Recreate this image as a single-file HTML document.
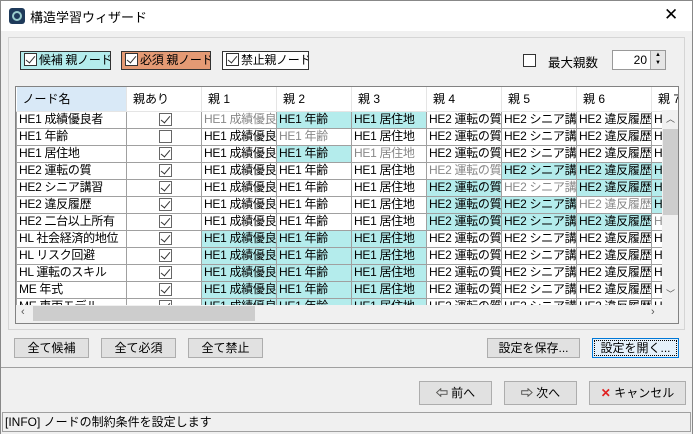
<!DOCTYPE html>
<html><head><meta charset="utf-8"><style>
*{box-sizing:border-box;margin:0;padding:0}
body{width:693px;height:434px;background:#f0f0f0;font-family:"Liberation Sans","Noto Sans CJK JP",sans-serif;font-size:12px;color:#000;position:relative;overflow:hidden}
.abs{position:absolute}
.title{left:0;top:0;width:693px;height:31px;background:#fff;border:1px solid #888;border-bottom:none}
.btn{position:absolute;background:#e1e1e1;border:1px solid #adadad;text-align:center;font-size:12px;line-height:18px;white-space:nowrap}
.cb{display:inline-block;width:13px;height:13px;border:1px solid #333;background:#fff;position:relative;vertical-align:middle}
.cb.c::after{content:"";position:absolute;left:3px;top:0px;width:4px;height:8px;border:solid #333;border-width:0 1.5px 1.5px 0;transform:rotate(40deg)}
.tag{position:absolute;height:19px;border:1px solid #333;font-size:12px;line-height:17px;padding-left:3px;white-space:nowrap;overflow:hidden;letter-spacing:-0.3px}
.tag .cb{margin-right:2px;margin-top:-2px}
table{border-collapse:collapse;table-layout:fixed;font-size:12px}
td{height:17px;border:1px solid #a0a0a0;white-space:nowrap;overflow:hidden;padding-left:2px;line-height:15px;letter-spacing:-0.3px}
th{height:24px;font-weight:normal;text-align:left;padding-left:6px;background:#fff;border-right:1px solid #e5e5e5;border-bottom:1px solid #e5e5e5}
.t{background:#b4ecec}.g{color:#888}
td.k{text-align:center}
td.k .cb{border-color:#666;width:13px;height:13px}
</style></head><body>
<div class="abs title"></div>
<div class="abs" style="left:9px;top:8px;width:16px;height:16px;background:#1e3a5a;border-radius:3px"><div style="margin:3px;width:10px;height:10px;border-radius:50%;border:2px solid #9cc"></div></div>
<div class="abs" style="left:30px;top:7px;font-size:13px">構造学習ウィザード</div>
<div class="abs" style="left:664px;top:5px;font-size:17px;font-weight:300">✕</div>
<div class="abs" style="left:0;top:31px;width:693px;height:403px;border-left:1px solid #888;border-right:1px solid #888"></div>
<div class="abs" style="left:8px;top:37px;width:677px;height:293px;border:1px solid #d5d5d5"></div>

<div class="tag" style="left:20px;top:51px;width:91px;background:#b4ecec"><span class="cb c"></span>候補 親ノード</div>
<div class="tag" style="left:121px;top:51px;width:90px;background:#e49a74"><span class="cb c"></span>必須 親ノード</div>
<div class="tag" style="left:222px;top:51px;width:87px;background:#fff"><span class="cb c"></span>禁止親ノード</div>
<div class="abs" style="left:523px;top:53px"><span class="cb"></span></div>
<div class="abs" style="left:548px;top:52px;font-size:12.5px">最大親数</div>
<div class="abs" style="left:612px;top:50px;width:54px;height:20px;border:1px solid #999;background:#fff;font-size:12px;line-height:18px;text-align:right;padding-right:18px">20</div>
<div class="abs" style="left:650px;top:51px;width:15px;height:18px;background:#e6e6e6;border-left:1px solid #aaa;font-size:6px;line-height:8px;text-align:center">▲<br>▼</div>

<div class="abs" style="left:15px;top:86px;width:664px;height:238px;border:1px solid #828282;background:#fff;overflow:hidden">
<table style="width:740px">
<colgroup><col style="width:110px"><col style="width:75px"><col style="width:75px"><col style="width:75px"><col style="width:75px"><col style="width:75px"><col style="width:75px"><col style="width:75px"><col style="width:105px"></colgroup>
<tr><th style="background:#d9e9f7">ノード名</th><th>親あり</th><th>親 1</th><th>親 2</th><th>親 3</th><th>親 4</th><th>親 5</th><th>親 6</th><th>親 7</th></tr>
<tr><td>HE1 成績優良者</td><td class="k"><span class="cb c"></span></td><td class="g">HE1 成績優良者</td><td class="t">HE1 年齢</td><td class="t">HE1 居住地</td><td>HE2 運転の質</td><td>HE2 シニア講習</td><td>HE2 違反履歴</td><td>HE2</td></tr>
<tr><td>HE1 年齢</td><td class="k"><span class="cb"></span></td><td>HE1 成績優良者</td><td class="g">HE1 年齢</td><td>HE1 居住地</td><td>HE2 運転の質</td><td>HE2 シニア講習</td><td>HE2 違反履歴</td><td>HE2</td></tr>
<tr><td>HE1 居住地</td><td class="k"><span class="cb c"></span></td><td>HE1 成績優良者</td><td class="t">HE1 年齢</td><td class="g">HE1 居住地</td><td>HE2 運転の質</td><td>HE2 シニア講習</td><td>HE2 違反履歴</td><td>HE2</td></tr>
<tr><td>HE2 運転の質</td><td class="k"><span class="cb c"></span></td><td>HE1 成績優良者</td><td>HE1 年齢</td><td>HE1 居住地</td><td class="g">HE2 運転の質</td><td class="t">HE2 シニア講習</td><td class="t">HE2 違反履歴</td><td class="t">HE2</td></tr>
<tr><td>HE2 シニア講習</td><td class="k"><span class="cb c"></span></td><td>HE1 成績優良者</td><td>HE1 年齢</td><td>HE1 居住地</td><td class="t">HE2 運転の質</td><td class="g">HE2 シニア講習</td><td class="t">HE2 違反履歴</td><td class="t">HE2</td></tr>
<tr><td>HE2 違反履歴</td><td class="k"><span class="cb c"></span></td><td>HE1 成績優良者</td><td>HE1 年齢</td><td>HE1 居住地</td><td class="t">HE2 運転の質</td><td class="t">HE2 シニア講習</td><td class="g">HE2 違反履歴</td><td class="t">HE2</td></tr>
<tr><td>HE2 二台以上所有</td><td class="k"><span class="cb c"></span></td><td>HE1 成績優良者</td><td>HE1 年齢</td><td>HE1 居住地</td><td class="t">HE2 運転の質</td><td class="t">HE2 シニア講習</td><td class="t">HE2 違反履歴</td><td class="g">HE2</td></tr>
<tr><td>HL 社会経済的地位</td><td class="k"><span class="cb c"></span></td><td class="t">HE1 成績優良者</td><td class="t">HE1 年齢</td><td class="t">HE1 居住地</td><td>HE2 運転の質</td><td>HE2 シニア講習</td><td>HE2 違反履歴</td><td>HE2</td></tr>
<tr><td>HL リスク回避</td><td class="k"><span class="cb c"></span></td><td class="t">HE1 成績優良者</td><td class="t">HE1 年齢</td><td class="t">HE1 居住地</td><td>HE2 運転の質</td><td>HE2 シニア講習</td><td>HE2 違反履歴</td><td>HE2</td></tr>
<tr><td>HL 運転のスキル</td><td class="k"><span class="cb c"></span></td><td class="t">HE1 成績優良者</td><td class="t">HE1 年齢</td><td class="t">HE1 居住地</td><td>HE2 運転の質</td><td>HE2 シニア講習</td><td>HE2 違反履歴</td><td>HE2</td></tr>
<tr><td>ME 年式</td><td class="k"><span class="cb c"></span></td><td class="t">HE1 成績優良者</td><td class="t">HE1 年齢</td><td class="t">HE1 居住地</td><td>HE2 運転の質</td><td>HE2 シニア講習</td><td>HE2 違反履歴</td><td>HE2</td></tr>
<tr><td>ME 車両モデル</td><td class="k"><span class="cb c"></span></td><td class="t">HE1 成績優良者</td><td class="t">HE1 年齢</td><td class="t">HE1 居住地</td><td>HE2 運転の質</td><td>HE2 シニア講習</td><td>HE2 違反履歴</td><td>HE2</td></tr>
</table>
<div class="abs" style="left:646px;top:23px;width:17px;height:195px;background:#f0f0f0"><div style="text-align:center;font-size:9px;color:#555;margin-top:2px">︿</div><div style="margin:4px 1px;height:86px;background:#cdcdcd"></div><div class="abs" style="top:177px;width:17px;text-align:center;font-size:9px;color:#555">﹀</div></div>
<div class="abs" style="left:0;top:218px;width:663px;height:18px;background:#f0f0f0"><span class="abs" style="left:5px;top:1px;font-size:11px;color:#555">‹</span><div class="abs" style="left:17px;top:1px;width:222px;height:15px;background:#cdcdcd"></div><span class="abs" style="left:635px;top:1px;font-size:11px;color:#555">›</span></div>
</div>

<div class="btn" style="left:14px;top:338px;width:75px;height:20px">全て候補</div>
<div class="btn" style="left:101px;top:338px;width:75px;height:20px">全て必須</div>
<div class="btn" style="left:188px;top:338px;width:75px;height:20px">全て禁止</div>
<div class="btn" style="left:487px;top:338px;width:93px;height:20px">設定を保存...</div>
<div class="btn" style="left:592px;top:338px;width:87px;height:20px;background:#e5f1fb;border-color:#0078d7;outline:1px dotted #000;outline-offset:-3px">設定を開く...</div>
<div class="abs" style="left:1px;top:367px;width:691px;border-top:1px solid #a0a0a0"></div>
<div class="btn" style="left:419px;top:381px;width:73px;height:24px;line-height:22px"><span style="color:#e8c84a;-webkit-text-stroke:0.5px #555">⇦</span> 前へ</div>
<div class="btn" style="left:504px;top:381px;width:73px;height:24px;line-height:22px"><span style="color:#e8c84a;-webkit-text-stroke:0.5px #555">⇨</span> 次へ</div>
<div class="btn" style="left:589px;top:381px;width:97px;height:24px;line-height:22px"><span style="color:#e02020;font-weight:bold">✕</span> キャンセル</div>
<div class="abs" style="left:2px;top:412px;width:689px;height:20px;border:1px solid #a0a0a0;font-size:12px;line-height:18px;padding-left:2px">[INFO] ノードの制約条件を設定します</div>
</body></html>
